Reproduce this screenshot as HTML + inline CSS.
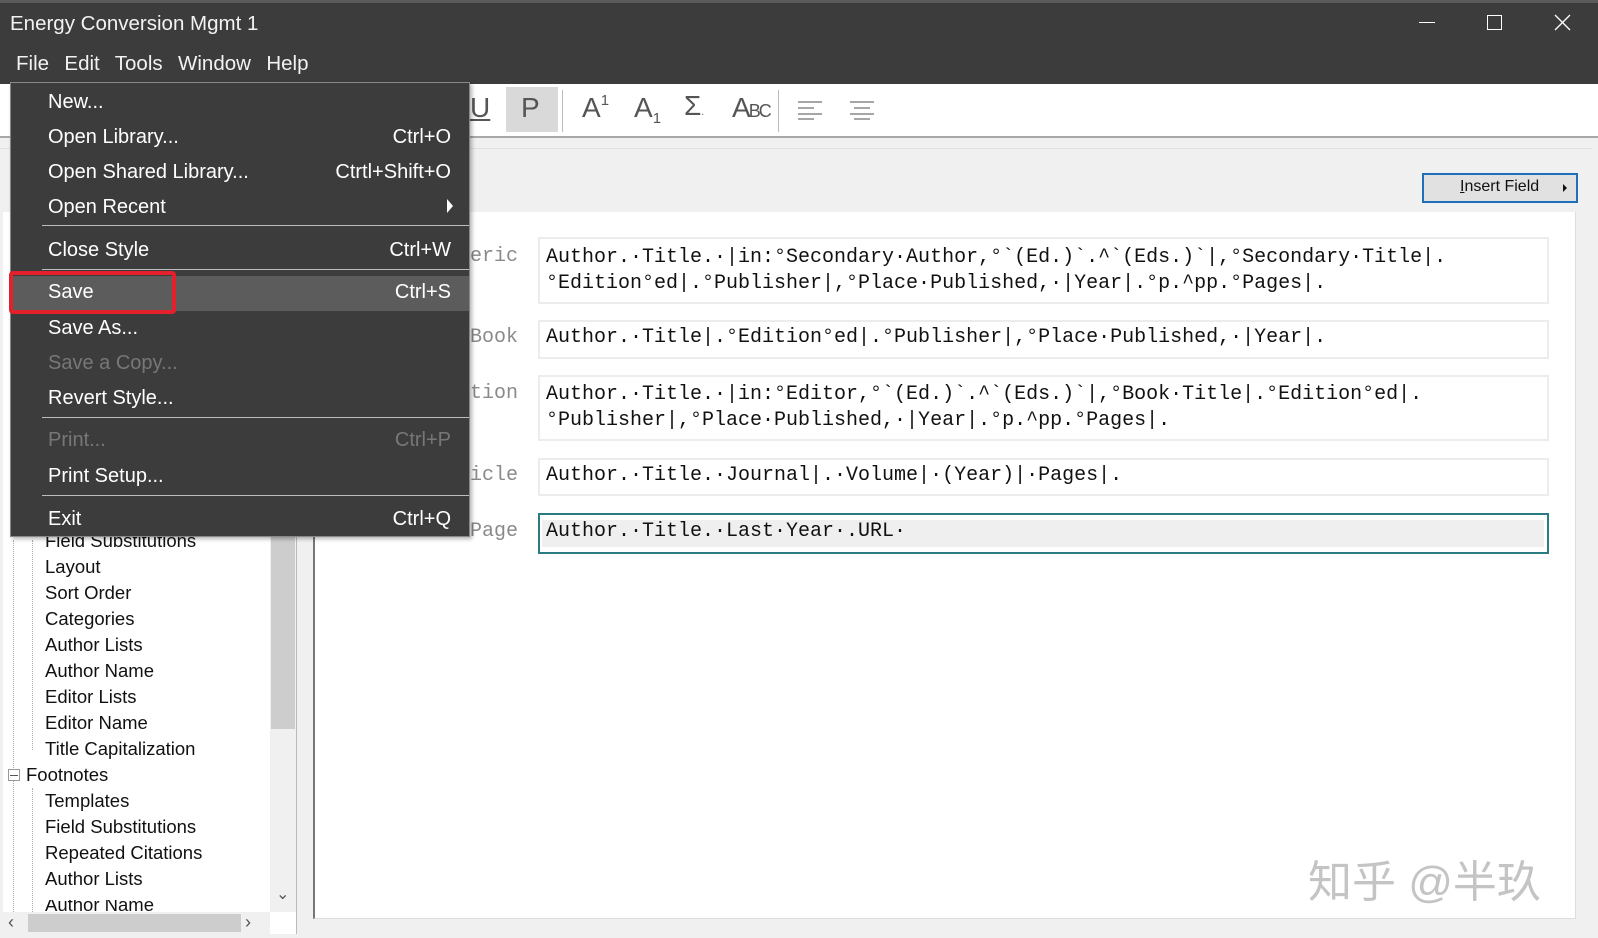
<!DOCTYPE html>
<html><head><meta charset="utf-8"><style>
*{margin:0;padding:0;box-sizing:border-box}
body{width:1598px;height:938px;position:relative;overflow:hidden;background:#f0f0f0;font-family:"Liberation Sans","Noto Sans CJK SC",sans-serif}
.a{position:absolute;white-space:nowrap}
.mono{font-family:"Liberation Mono",monospace;font-size:20px;color:#111}
.lbl{font-family:"Liberation Mono",monospace;font-size:20px;color:#8a8a8a;text-align:right;width:120px}
.box{position:absolute;left:538px;width:1011px;background:#fff;border:2px solid #ececec}
.tree{font-size:18.5px;color:#111;left:45px}
.mi{position:absolute;left:37px;font-size:20px;color:#fff;line-height:24px}
.sc{position:absolute;right:18px;font-size:20px;color:#fff;line-height:24px}
.dis{color:#777}
.sep{position:absolute;left:31px;right:0;height:1px;background:#bdbdbd}
</style></head><body>
<div class="a" style="left:0;top:0;width:1598px;height:84px;background:#3c3c3c;border-top:3px solid #5a5a5a"></div>
<div class="a" style="left:10px;top:12px;font-size:20.5px;color:#f2f2f2">Energy Conversion Mgmt 1</div>
<div class="a" style="left:16px;top:52px;font-size:20.5px;color:#f2f2f2;word-spacing:2px">File&nbsp; Edit&nbsp; Tools&nbsp; Window&nbsp; Help</div>
<div class="a" style="left:1419px;top:22px;width:16px;height:1px;background:#fff"></div>
<div class="a" style="left:1487px;top:15px;width:15px;height:15px;border:1px solid #fff"></div>
<svg class="a" style="left:1554px;top:14px" width="17" height="17"><path d="M1 1L16 16M16 1L1 16" stroke="#fff" stroke-width="1.3"/></svg>
<div class="a" style="left:0;top:84px;width:1598px;height:54px;background:#fff;border-bottom:2px solid #a8a8a8"></div>
<div class="a" style="left:506px;top:87px;width:52px;height:45px;background:#d9d9d9"></div>
<div class="a" style="left:470px;top:92px;font-size:28px;color:#555;text-decoration:underline">U</div>
<div class="a" style="left:521px;top:92px;font-size:28px;color:#555">P</div>
<div class="a" style="left:562px;top:90px;width:1px;height:42px;background:#bbb"></div>
<div class="a" style="left:582px;top:92px;font-size:28px;color:#555">A<sup style="font-size:15px;vertical-align:12px">1</sup></div>
<div class="a" style="left:634px;top:92px;font-size:28px;color:#555">A<sub style="font-size:15px;vertical-align:-6px">1</sub></div>
<div class="a" style="left:684px;top:90px;font-size:28px;color:#555">Σ<span style="font-size:10px">.</span></div>
<div class="a" style="left:732px;top:92px;font-size:28px;color:#555;letter-spacing:-2px">A<span style="font-size:18px">BC</span></div>
<div class="a" style="left:778px;top:90px;width:1px;height:42px;background:#bbb"></div>
<svg class="a" style="left:798px;top:100px" width="24" height="20"><path d="M0 2H24M0 8H16M0 14H24M0 19H16" stroke="#888" stroke-width="1.5"/></svg>
<svg class="a" style="left:850px;top:100px" width="24" height="20"><path d="M0 2H24M4 8H20M0 14H24M4 19H20" stroke="#888" stroke-width="1.5"/></svg>
<div class="a" style="left:0;top:148px;width:1592px;height:1px;background:#e0e0e0"></div>
<div class="a" style="left:1422px;top:173px;width:156px;height:30px;background:#e1e1e1;border:2px solid #1f70b8"></div>
<div class="a" style="left:1460px;top:178px;font-size:16px;color:#111"><u>I</u>nsert Field</div>
<div class="a" style="left:1563px;top:184px;width:0;height:0;border-left:4px solid #111;border-top:4px solid transparent;border-bottom:4px solid transparent"></div>
<div class="a" style="left:3px;top:212px;width:294px;height:722px;background:#fff;border-right:1px solid #bbb"></div>
<div class="a" style="left:270px;top:212px;width:26px;height:700px;background:#f0f0f0"></div>
<div class="a" style="left:271px;top:212px;width:24px;height:517px;background:#cdcdcd"></div>
<div class="a" style="left:276px;top:884px;font-size:16px;color:#555">&#8964;</div>
<div class="a" style="left:3px;top:912px;width:267px;height:22px;background:#f0f0f0"></div>
<div class="a" style="left:28px;top:914px;width:213px;height:18px;background:#cdcdcd"></div>
<div class="a" style="left:8px;top:912px;font-size:18px;color:#555">‹</div>
<div class="a" style="left:245px;top:912px;font-size:18px;color:#555">›</div>
<div class="a" style="left:13px;top:540px;width:0;height:372px;border-left:1px dotted #aaa"></div>
<div class="a" style="left:32px;top:540px;width:0;height:210px;border-left:1px dotted #aaa"></div>
<div class="a" style="left:32px;top:788px;width:0;height:124px;border-left:1px dotted #aaa"></div>
<div class="a" style="left:8px;top:769px;width:12px;height:12px;border:1px solid #999;background:#fff"></div>
<div class="a" style="left:10px;top:775px;width:8px;height:1px;background:#555"></div>
<div class="a tree" style="top:530px">Field Substitutions</div>
<div class="a tree" style="top:556px">Layout</div>
<div class="a tree" style="top:582px">Sort Order</div>
<div class="a tree" style="top:608px">Categories</div>
<div class="a tree" style="top:634px">Author Lists</div>
<div class="a tree" style="top:660px">Author Name</div>
<div class="a tree" style="top:686px">Editor Lists</div>
<div class="a tree" style="top:712px">Editor Name</div>
<div class="a tree" style="top:738px">Title Capitalization</div>
<div class="a tree" style="top:764px;left:26px">Footnotes</div>
<div class="a tree" style="top:790px">Templates</div>
<div class="a tree" style="top:816px">Field Substitutions</div>
<div class="a tree" style="top:842px">Repeated Citations</div>
<div class="a tree" style="top:868px">Author Lists</div>
<div class="a" style="left:3px;top:900px;width:267px;height:12px;overflow:hidden"><div class="a tree" style="top:-6px;left:42px">Author Name</div></div>
<div class="a" style="left:303px;top:212px;width:1289px;height:722px;background:#f0f0f0"></div>
<div class="a" style="left:313px;top:212px;width:1263px;height:707px;background:#fff;border-left:2px solid #777;border-right:1px solid #ddd;border-bottom:1px solid #ddd"></div>
<div class="a lbl" style="left:398px;top:245px">eric</div>
<div class="a lbl" style="left:398px;top:326px">Book</div>
<div class="a lbl" style="left:398px;top:382px">tion</div>
<div class="a lbl" style="left:398px;top:464px">icle</div>
<div class="a lbl" style="left:398px;top:520px"><span style="color:#d8d8d8">Web</span> Page</div>
<div class="box" style="top:237px;height:67px"></div>
<div class="a mono" style="left:546px;top:245px;line-height:26px">Author.·Title.·|in:°Secondary·Author,°`(Ed.)`.^`(Eds.)`|,°Secondary·Title|.<br>°Edition°ed|.°Publisher|,°Place·Published,·|Year|.°p.^pp.°Pages|.</div>
<div class="box" style="top:320px;height:39px"></div>
<div class="a mono" style="left:546px;top:326px">Author.·Title|.°Edition°ed|.°Publisher|,°Place·Published,·|Year|.</div>
<div class="box" style="top:375px;height:66px"></div>
<div class="a mono" style="left:546px;top:382px;line-height:26px">Author.·Title.·|in:°Editor,°`(Ed.)`.^`(Eds.)`|,°Book·Title|.°Edition°ed|.<br>°Publisher|,°Place·Published,·|Year|.°p.^pp.°Pages|.</div>
<div class="box" style="top:458px;height:38px"></div>
<div class="a mono" style="left:546px;top:464px">Author.·Title.·Journal|.·Volume|·(Year)|·Pages|.</div>
<div class="box" style="top:513px;height:41px;border:2px solid #2a7c80"></div>
<div class="a" style="left:542px;top:520px;width:1002px;height:27px;background:#efefef"></div>
<div class="a mono" style="left:546px;top:520px">Author.·Title.·Last·Year·.URL·</div>
<div class="a" style="left:1308px;top:846px;font-size:44px;color:#c4c4c4">知乎 @半玖</div>
<div class="a" style="left:10px;top:82px;width:460px;height:455px;background:#3c3c3c;border:1px solid #888;box-shadow:2px 2px 4px rgba(0,0,0,.3)">
<div style="position:absolute;left:0;right:0;top:193px;height:35px;background:#5c5c5c"></div>
<div class="mi" style="top:7px">New...</div>
<div class="mi" style="top:42px">Open Library...</div><div class="sc" style="top:42px">Ctrl+O</div>
<div class="mi" style="top:77px">Open Shared Library...</div><div class="sc" style="top:77px">Ctrtl+Shift+O</div>
<div class="mi" style="top:112px">Open Recent</div>
<div style="position:absolute;left:436px;top:116px;border-left:6px solid #fff;border-top:7px solid transparent;border-bottom:7px solid transparent"></div>
<div class="sep" style="top:142px"></div>
<div class="mi" style="top:155px">Close Style</div><div class="sc" style="top:155px">Ctrl+W</div>
<div class="sep" style="top:186px"></div>
<div class="mi" style="top:197px">Save</div><div class="sc" style="top:197px">Ctrl+S</div>
<div class="mi" style="top:233px">Save As...</div>
<div class="mi dis" style="top:268px">Save a Copy...</div>
<div class="mi" style="top:303px">Revert Style...</div>
<div class="sep" style="top:334px"></div>
<div class="mi dis" style="top:345px">Print...</div><div class="sc dis" style="top:345px">Ctrl+P</div>
<div class="mi" style="top:381px">Print Setup...</div>
<div class="sep" style="top:412px"></div>
<div class="mi" style="top:424px">Exit</div><div class="sc" style="top:424px">Ctrl+Q</div>
</div>
<div class="a" style="left:9px;top:271px;width:167px;height:43px;border:4px solid #e3202b;border-radius:4px"></div>
</body></html>
